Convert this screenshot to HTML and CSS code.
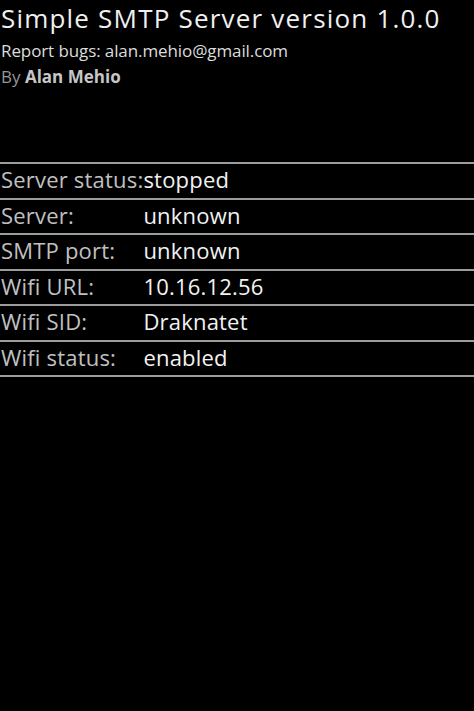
FILE: index.html
```html
<!DOCTYPE html>
<html>
<head>
<meta charset="utf-8">
<link rel="stylesheet" href="styles.css">
</head>
<body>
<div class="header">
  <div class="title">Simple SMTP Server version 1.0.0</div>
  <div class="report">Report bugs: alan.mehio@gmail.com</div>
  <div class="by">By <b class="author">Alan Mehio</b></div>
</div>
<table class="info">
  <tr><td class="label">Server status:</td><td class="value">stopped</td></tr>
  <tr><td class="label">Server:</td><td class="value">unknown</td></tr>
  <tr><td class="label">SMTP port:</td><td class="value">unknown</td></tr>
  <tr><td class="label">Wifi URL:</td><td class="value">10.16.12.56</td></tr>
  <tr><td class="label">Wifi SID:</td><td class="value">Draknatet</td></tr>
  <tr><td class="label">Wifi status:</td><td class="value">enabled</td></tr>
</table>
</body>
</html>
```

FILE: styles.css
```css
html, body {
  margin: 0;
  padding: 0;
  background: #000;
}
body {
  font-family: "Open Sans", "Noto Sans", sans-serif;
  color: #fff;
  width: 474px;
  height: 711px;
  overflow: hidden;
}
.header {
  padding: 2px 0 0 1px;
}
.title {
  font-size: 26px;
  line-height: 32px;
  letter-spacing: 1.2px;
  color: #f0f0f0;
  margin-bottom: 4px;
}
.report {
  font-size: 17px;
  line-height: 26px;
  letter-spacing: -0.1px;
  color: #dcdcdc;
}
.by {
  font-size: 17px;
  line-height: 26px;
  color: #969696;
}
.author {
  color: #c6c6c6;
  font-weight: 700;
}
.info {
  margin-top: 72px;
  width: 100%;
  border-collapse: collapse;
  border-bottom: 2px solid #9c9c9c;
}
.info tr {
  border-top: 2px solid #9c9c9c;
}
.info td {
  padding: 0;
  height: 33.5px;
  font-size: 22px;
  line-height: 30px;
  letter-spacing: 0.2px;
  vertical-align: top;
}
.label {
  width: 1%;
  white-space: nowrap;
  color: #c0c0c0;
  padding-left: 1px !important;
}
.value {
  color: #f2f2f2;
}
```
